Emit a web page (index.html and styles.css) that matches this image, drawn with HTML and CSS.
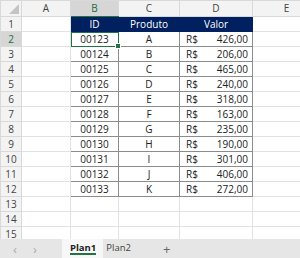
FILE: index.html
```html
<!DOCTYPE html>
<html lang="pt-BR">
<head>
    <meta charset="UTF-8">
    <meta name="viewport" content="width=device-width, initial-scale=1.0">
    <title>Plan1</title>
    <link rel="stylesheet" href="styles.css">
</head>
<body>
    <div class="sheet">
        <table class="grid">
            <colgroup>
                <col class="col-rownum">
                <col class="col-a">
                <col class="col-b">
                <col class="col-c">
                <col class="col-d">
                <col class="col-e">
            </colgroup>
            <tr class="col-heads">
                <th class="corner"><span class="tri"></span></th>
                <th>A</th>
                <th class="active">B</th>
                <th>C</th>
                <th>D</th>
                <th>E</th>
            </tr>
            <tr>
                <th class="rownum">1</th>
                <td></td>
                <td class="head">ID</td>
                <td class="head">Produto</td>
                <td class="head">Valor</td>
                <td></td>
            </tr>
            <tr>
                <th class="rownum active">2</th>
                <td></td>
                <td class="cell selected">00123<span class="handle"></span></td>
                <td class="cell">A</td>
                <td class="cell money"><span>R$</span><span>426,00</span></td>
                <td></td>
            </tr>
            <tr>
                <th class="rownum">3</th>
                <td></td>
                <td class="cell">00124</td>
                <td class="cell">B</td>
                <td class="cell money"><span>R$</span><span>206,00</span></td>
                <td></td>
            </tr>
            <tr>
                <th class="rownum">4</th>
                <td></td>
                <td class="cell">00125</td>
                <td class="cell">C</td>
                <td class="cell money"><span>R$</span><span>465,00</span></td>
                <td></td>
            </tr>
            <tr>
                <th class="rownum">5</th>
                <td></td>
                <td class="cell">00126</td>
                <td class="cell">D</td>
                <td class="cell money"><span>R$</span><span>240,00</span></td>
                <td></td>
            </tr>
            <tr>
                <th class="rownum">6</th>
                <td></td>
                <td class="cell">00127</td>
                <td class="cell">E</td>
                <td class="cell money"><span>R$</span><span>318,00</span></td>
                <td></td>
            </tr>
            <tr>
                <th class="rownum">7</th>
                <td></td>
                <td class="cell">00128</td>
                <td class="cell">F</td>
                <td class="cell money"><span>R$</span><span>163,00</span></td>
                <td></td>
            </tr>
            <tr>
                <th class="rownum">8</th>
                <td></td>
                <td class="cell">00129</td>
                <td class="cell">G</td>
                <td class="cell money"><span>R$</span><span>235,00</span></td>
                <td></td>
            </tr>
            <tr>
                <th class="rownum">9</th>
                <td></td>
                <td class="cell">00130</td>
                <td class="cell">H</td>
                <td class="cell money"><span>R$</span><span>190,00</span></td>
                <td></td>
            </tr>
            <tr>
                <th class="rownum">10</th>
                <td></td>
                <td class="cell">00131</td>
                <td class="cell">I</td>
                <td class="cell money"><span>R$</span><span>301,00</span></td>
                <td></td>
            </tr>
            <tr>
                <th class="rownum">11</th>
                <td></td>
                <td class="cell">00132</td>
                <td class="cell">J</td>
                <td class="cell money"><span>R$</span><span>406,00</span></td>
                <td></td>
            </tr>
            <tr>
                <th class="rownum">12</th>
                <td></td>
                <td class="cell">00133</td>
                <td class="cell">K</td>
                <td class="cell money"><span>R$</span><span>272,00</span></td>
                <td></td>
            </tr>
            <tr>
                <th class="rownum">13</th>
                <td></td><td></td><td></td><td></td><td></td>
            </tr>
            <tr>
                <th class="rownum">14</th>
                <td></td><td></td><td></td><td></td><td></td>
            </tr>
            <tr>
                <th class="rownum">15</th>
                <td></td><td></td><td></td><td></td><td></td>
            </tr>
        </table>
    </div>

    <!-- Sheet tabs -->
    <div class="tabs">
        <span class="nav first">&lsaquo;</span>
        <span class="nav">&rsaquo;</span>
        <span class="tab current">Plan1</span>
        <span class="tab">Plan2</span>
        <span class="add">+</span>
    </div>
</body>
</html>
```

FILE: styles.css
```css
body {
    margin: 0;
    width: 300px;
    height: 258px;
    overflow: hidden;
    background: #fff;
    font-family: "Open Sans", "Liberation Sans", sans-serif;
    font-size: 10px;
    color: #222;
}
.sheet {
    height: 239px;
    overflow: hidden;
}
.grid {
    border-collapse: collapse;
    table-layout: fixed;
    width: 320px;
}
.col-rownum { width: 21px; }
.col-a { width: 49px; }
.col-b { width: 48px; }
.col-c { width: 61px; }
.col-d { width: 73px; }
.col-e { width: 68px; }
.grid td, .grid th {
    height: 14px;
    padding: 0;
    border: 1px solid #e2e2e2;
    line-height: 13px;
    white-space: nowrap;
    font-weight: normal;
}
.col-heads th {
    height: 15px;
    background: #f3f3f3;
    border-color: #d9d9d9;
    color: #444;
    text-align: center;
}
.col-heads th.active {
    background: #d6d6d6;
    color: #216b43;
    border-bottom: 1px solid #217346;
}
.corner {
    position: relative;
}
.tri {
    position: absolute;
    right: 2px;
    bottom: 2px;
    width: 0;
    height: 0;
    border-left: 10px solid transparent;
    border-bottom: 10px solid #c4c4c4;
}
.rownum {
    background: #f3f3f3;
    border-color: #d9d9d9 !important;
    color: #444;
    text-align: center;
}
.rownum.active {
    background: #d6d6d6;
    color: #216b43;
}
.head {
    background: #002060;
    color: #fff;
    text-align: center;
    border-color: #002060 !important;
}
.cell {
    text-align: center;
    border: 1px solid #8c8c8c !important;
}
.money {
    text-align: left;
    padding: 0 4px 0 6px !important;
}
.money span:last-child {
    float: right;
}
.selected {
    position: relative;
    outline: 1px solid #217346;
    outline-offset: -1px;
}
.handle {
    position: absolute;
    right: -3px;
    bottom: -3px;
    width: 4px;
    height: 4px;
    background: #217346;
    border: 1px solid #fff;
}
.tabs {
    height: 19px;
    background: #e6e6e6;
    display: flex;
    align-items: center;
    font-size: 9.5px;
    color: #444;
}
.nav {
    width: 20px;
    text-align: center;
    color: #aaa;
    font-size: 13px;
}
.nav.first {
    margin-left: 5px;
}
.tab {
    padding: 0 4px 0 3px;
    height: 19px;
    line-height: 18px;
}
.tab.current {
    margin-left: 17px;
    padding: 0 7px 0 8px;
    background: #f7f7f7;
    font-weight: bold;
    color: #222;
    position: relative;
}
.tab.current::after {
    content: "";
    position: absolute;
    left: 8px;
    right: 7px;
    bottom: 3px;
    height: 2px;
    background: #217346;
}
.add {
    margin-left: 28px;
    font-size: 13px;
    color: #666;
}
```
